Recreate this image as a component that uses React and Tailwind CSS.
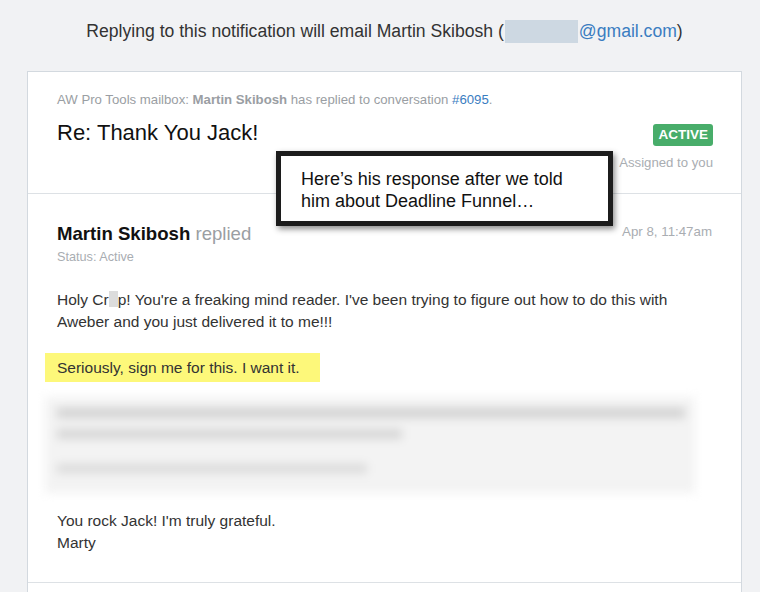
export default function App() {
  const font = { fontFamily: '"Liberation Sans", Arial, sans-serif' };
  return (
    <div className="relative min-h-[592px] w-[760px] overflow-hidden bg-[#f1f2f4]" style={font}>
      <div className="ml-[27px] flex h-[71px] w-[715px] items-center justify-center pb-[8px] text-[17.6px] text-[#333]">
        <span>Replying to this notification will email Martin Skibosh (</span>
        <span className="mx-[1px] inline-block h-[23px] w-[73px] bg-[#cdd8e2]" />
        <span className="text-[#3a7dc1]">@gmail.com</span>
        <span>)</span>
      </div>

      <div className="ml-[27px] w-[715px] border border-[#d3d9df] bg-white">
        <div className="border-b border-[#dde1e5] pb-[22px] pl-[29px] pr-[28px] pt-[20px]">
          <p className="text-[13.2px] leading-[16px] text-[#9a9ea3]">
            AW Pro Tools mailbox: <b className="font-bold">Martin Skibosh</b> has replied to conversation{' '}
            <span className="text-[#3a7dc1]">#6095</span>.
          </p>
          <div className="mt-[12px] flex items-start justify-between">
            <h1 className="text-[22px] leading-[26px] text-[#111]">Re: Thank You Jack!</h1>
            <span className="mt-[4px] rounded-[3px] bg-[#48ad6a] px-[5px] py-[3px] text-[13.5px] font-bold leading-[16px] text-white">
              ACTIVE
            </span>
          </div>
          <p className="mt-[9px] text-right text-[13.2px] leading-[16px] text-[#a9adb2]">Assigned to you</p>
        </div>

        <div className="border-b border-[#dde1e5] px-[29px] pb-[28px] pt-[29px]">
          <div className="flex items-start justify-between">
            <div>
              <p className="text-[18.6px] leading-[22px]">
                <span className="font-bold text-[#111]">Martin Skibosh</span>{' '}
                <span className="text-[#9a9ea3]">replied</span>
              </p>
              <p className="mt-[4px] text-[12.7px] leading-[16px] text-[#a9adb2]">Status: Active</p>
            </div>
            <p className="mt-[1px] text-[13.3px] leading-[16px] text-[#a9adb2]">Apr 8, 11:47am</p>
          </div>

          <p className="mt-[24px] text-[15.5px] leading-[22px] text-[#333]">
            Holy Cr<span className="inline-block h-[16px] w-[9px] bg-[#dcdcdc] align-[-2px]" />p! You're a freaking mind reader. I've been trying to figure out how to do this with Aweber and you just delivered it to me!!!
          </p>

          <div className="-ml-[12px] mt-[20px] w-[275px] bg-[#fdf87a] py-[4px] pl-[12px] text-[15.5px] leading-[21px] text-[#333]">
            Seriously, sign me for this. I want it.
          </div>

          <div className="-ml-[12px] mt-[15px] h-[96px] w-[650px] bg-[#f3f3f3] blur-[5px]">
            <div className="px-[12px] pt-[11px]">
              <div className="h-[10px] w-[628px] bg-[#d2d2d2]" />
              <div className="mt-[11px] h-[10px] w-[345px] bg-[#d6d6d6]" />
              <div className="mt-[25px] h-[9px] w-[310px] bg-[#dadada]" />
            </div>
          </div>

          <p className="mt-[17px] text-[15.5px] leading-[22px] text-[#333]">
            You rock Jack! I'm truly grateful.
            <br />
            Marty
          </p>
        </div>
        <div className="h-[20px]" />
      </div>

      <div className="absolute left-[276px] top-[151px] h-[75px] w-[337px] border-[5px] border-[#1c1c1c] bg-white pl-[20px] pt-[12px] text-[18px] leading-[22px] text-[#111] shadow-[2px_3px_6px_rgba(0,0,0,0.45)]">
        Here’s his response after we told
        <br />
        him about Deadline Funnel…
      </div>
    </div>
  );
}
